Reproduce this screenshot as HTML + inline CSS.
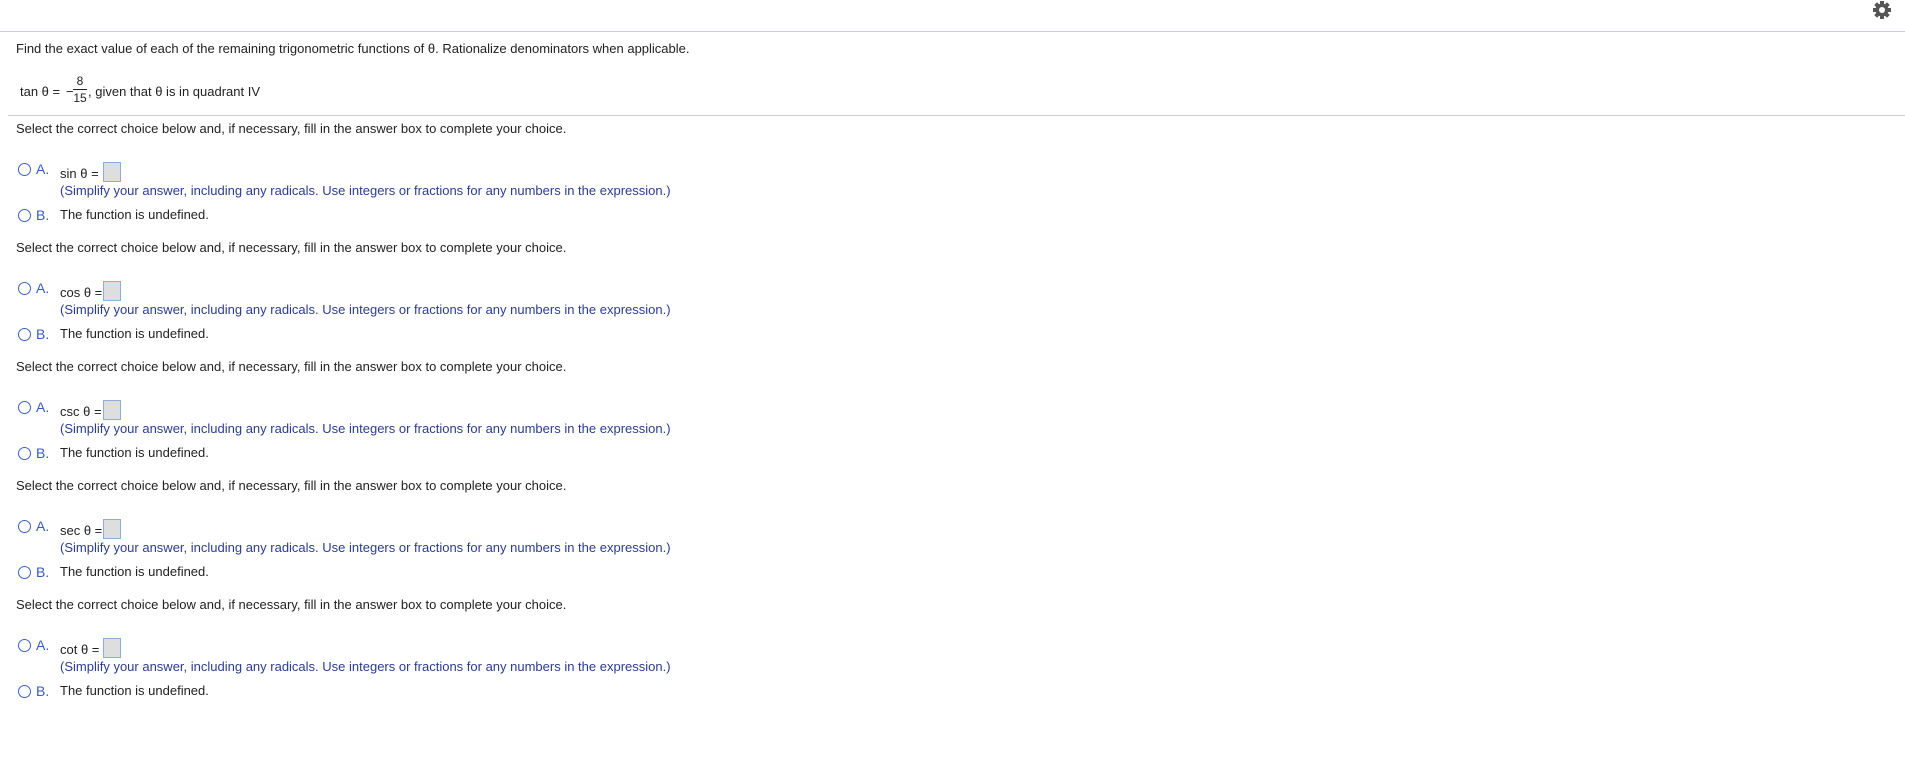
<!DOCTYPE html>
<html><head><style>
body{margin:0;width:1905px;height:770px;background:#fff;font-family:"Liberation Sans",Arial,sans-serif;font-size:13px;color:#222;position:relative;overflow:hidden}
.a{position:absolute;white-space:nowrap;line-height:16px}
.hr{position:absolute;height:1px;background:#c9ccd6}
.c{position:absolute;width:11px;height:11px;border:1.3px solid #3b63c4;border-radius:50%}
.l{color:#3a5bc7;font-size:14px}
.h{color:#2c3c8f}
.box{position:absolute;width:16px;height:18px;background:#dedede;border:1px solid #8fb0cc}
</style></head><body>
<div class="hr" style="left:0;top:31px;width:1905px"></div>
<svg style="position:absolute;left:1872px;top:0px" width="20" height="20" viewBox="0 0 20 20"><g fill="#555"><circle cx="10" cy="10" r="6.5"/><rect x="8" y="1" width="4" height="18"/><rect x="1" y="8" width="18" height="4"/><rect x="8" y="1" width="4" height="18" transform="rotate(45 10 10)"/><rect x="8" y="1" width="4" height="18" transform="rotate(-45 10 10)"/></g><circle cx="10" cy="10" r="3" fill="#fff"/></svg>
<div class="a" style="left:16px;top:41px">Find the exact value of each of the remaining trigonometric functions of θ. Rationalize denominators when applicable.</div>
<div class="a" style="left:20px;top:84px">tan θ =</div>
<div class="a" style="left:66px;top:84px">−</div>
<div class="a" style="left:72px;top:73px;font-size:12px;width:16px;text-align:center">8</div>
<div style="position:absolute;left:73px;top:89px;width:14px;height:1px;background:#222"></div>
<div class="a" style="left:72px;top:90px;font-size:12px;width:16px;text-align:center">15</div>
<div class="a" style="left:88px;top:84px">, given that θ is in quadrant IV</div>
<div class="hr" style="left:8px;top:115px;width:1897px"></div>

<div id="blocks"></div>
<script>
var f=["sin","cos","csc","sec","cot"],h="";
for(var i=0;i<5;i++){var y=121+i*119;
h+='<div class="a" style="left:16px;top:'+y+'px">Select the correct choice below and, if necessary, fill in the answer box to complete your choice.</div>';
h+='<div class="c" style="left:18px;top:'+(y+42)+'px"></div><div class="a l" style="left:36px;top:'+(y+40)+'px">A.</div>';
h+='<div class="a" style="left:60px;top:'+(y+45)+'px">'+f[i]+' θ =</div><div class="box" style="left:103px;top:'+(y+41)+'px"></div>';
h+='<div class="a h" style="left:60px;top:'+(y+62)+'px">(Simplify your answer, including any radicals. Use integers or fractions for any numbers in the expression.)</div>';
h+='<div class="c" style="left:18px;top:'+(y+88)+'px"></div><div class="a l" style="left:36px;top:'+(y+86)+'px">B.</div>';
h+='<div class="a" style="left:60px;top:'+(y+86)+'px">The function is undefined.</div>';}
document.getElementById("blocks").innerHTML=h;
</script>
</body></html>
